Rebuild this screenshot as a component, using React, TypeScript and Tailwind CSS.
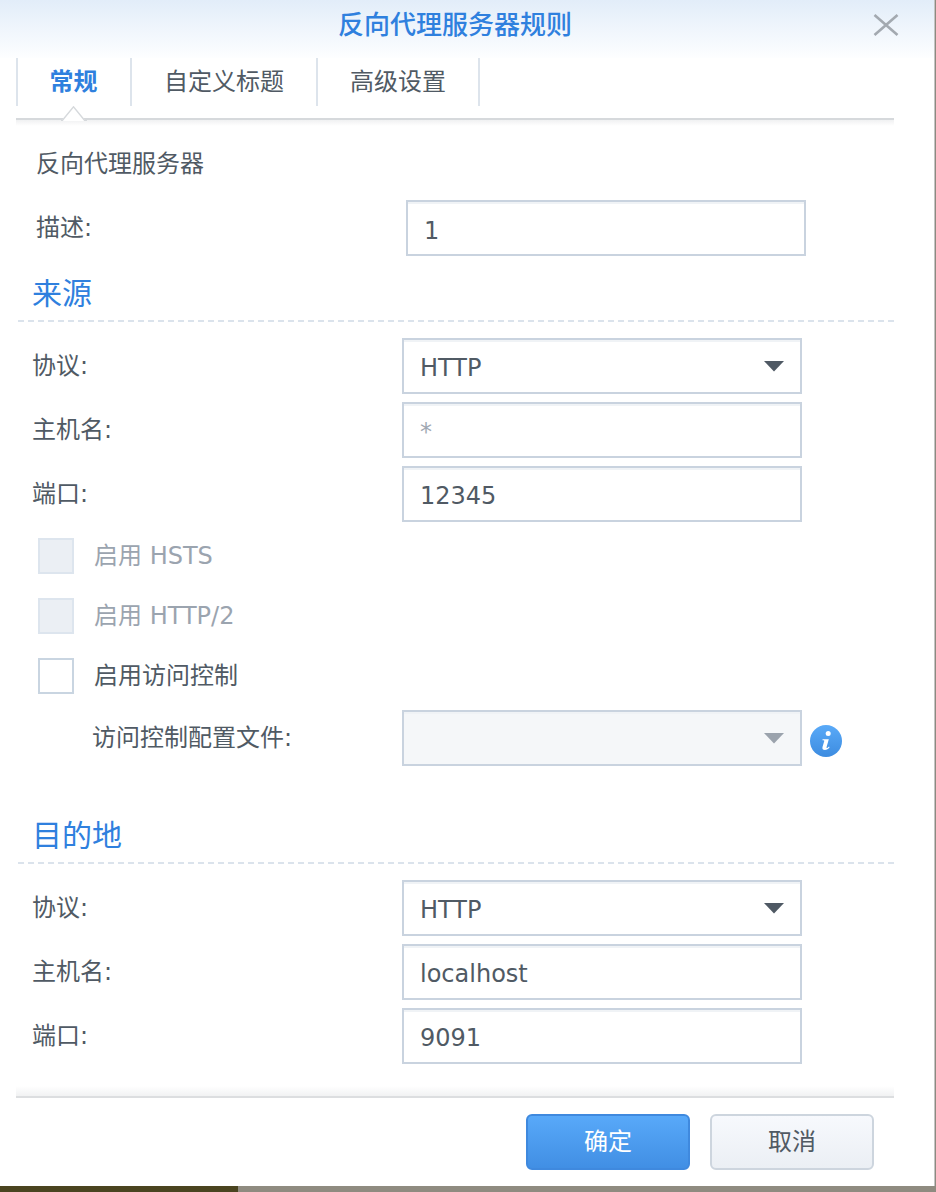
const font = '[font-family:"DejaVu_Sans","Noto_Sans_CJK_SC",sans-serif]';

function Caret({ disabled }: { disabled?: boolean }) {
  return (
    <svg width="20" height="11" viewBox="0 0 20 11" className="shrink-0">
      <path d="M0 0H20L10 10.5Z" fill={disabled ? '#9ba3ad' : '#4f5964'} />
    </svg>
  );
}

function Field({ label, value, select, muted, disabled }: { label: string; value?: string; select?: boolean; muted?: boolean; disabled?: boolean }) {
  return (
    <div className="flex items-center">
      <div className="w-[386px] pl-4 text-[24px] leading-[32px]">{label}</div>
      <div
        className={`flex h-14 w-[400px] items-center justify-between border-2 border-[#c9d3df] pl-[16px] pr-[16px] text-[24px] leading-[32px] shadow-[inset_0_2px_0_#f0f3f6] ${disabled ? 'bg-[#f5f7f9]' : 'bg-white'} ${muted ? 'text-[#a0a8b2]' : ''}`}
      >
        <span className="pt-[3px]">{value}</span>
        {select && <Caret disabled={disabled} />}
      </div>
    </div>
  );
}

function Check({ label, disabled }: { label: string; disabled?: boolean }) {
  return (
    <div className="flex items-center pl-[22px]">
      <div className={`h-9 w-9 border-2 ${disabled ? 'border-[#dde5ee] bg-[#ebeff4]' : 'border-[#c9d5e1] bg-white'}`} />
      <span className={`ml-5 text-[24px] leading-[36px] ${disabled ? 'text-[#9ba4af]' : ''}`}>{label}</span>
    </div>
  );
}

function SectionTitle({ children, mt }: { children: string; mt: string }) {
  return (
    <>
      <div className={`${mt} h-10 pl-4 text-[30px] leading-[42px] text-[#2f80de]`}>{children}</div>
      <div className="mt-[7px] h-[2px] bg-[repeating-linear-gradient(90deg,#dbe3ec_0_6px,transparent_6px_10px)] bg-[position:2px_0]" />
    </>
  );
}

function InfoIcon() {
  return (
    <svg width="32" height="32" viewBox="0 0 32 32" className="ml-2 mt-[6px] shrink-0">
      <defs>
        <linearGradient id="info" x1="0" y1="0" x2="0" y2="1">
          <stop offset="0" stopColor="#5aaaf8" />
          <stop offset="1" stopColor="#3d8ce0" />
        </linearGradient>
      </defs>
      <circle cx="16" cy="16" r="16" fill="url(#info)" />
      <circle cx="18.2" cy="8.6" r="2.5" fill="#fff" />
      <path d="M12.6 14.2h6.2l-2.3 8c-.2.8.5 1 1.1.5l1.4-1.2.6.8c-1.3 1.7-2.8 2.7-4.7 2.7-2 0-2.9-1-2.4-2.9l1.7-5.8c.2-.7-.1-1-1.8-1z" fill="#fff" />
    </svg>
  );
}

export default function App() {
  return (
    <div className={`h-[1192px] w-[936px] overflow-hidden bg-[#8d8a80] text-[#505a64] ${font}`}>
      <div className="h-[1186px] w-[935px] border-r border-[#c4c4c4] bg-white">
        {/* Title bar */}
        <div className="relative flex h-[58px] items-center justify-center bg-gradient-to-b from-[#e2edf9] to-[#fdfeff] pr-[24px]">
          <span className="-mt-[8px] text-[26px] font-medium leading-[36px] text-[#2f80de]">反向代理服务器规则</span>
          <svg width="26" height="22" viewBox="0 0 26 22" className="absolute right-[35px] top-[14px]">
            <path d="M1.5 1L24.5 21M24.5 1L1.5 21" stroke="#a3a9b0" strokeWidth="2.6" fill="none" />
          </svg>
        </div>

        {/* Tabs */}
        <div className="ml-4 flex h-12 text-[24px] leading-[48px]">
          <div className="w-[114px] border-l-2 border-[#dde4ec] pr-[1px] text-center font-bold text-[#2f80de]">常规</div>
          <div className="w-[186px] border-l-2 border-[#dde4ec] text-center">自定义标题</div>
          <div className="w-[162px] border-l-2 border-[#dde4ec] text-center">高级设置</div>
          <div className="w-[2px] bg-[#dde4ec]" />
        </div>
        <div className="relative mx-4 h-[14px] w-[878px] border-b-2 border-[#d6d9dc]">
          <div className="absolute left-0 right-0 top-[14px] h-[6px] bg-gradient-to-b from-[#f0f1f2] to-white" />
          <svg width="26" height="15" viewBox="0 0 26 15" className="absolute left-[45px] top-0">
            <path d="M1 14L12.5 0.5L24 14L26 15H0Z" fill="#fff" />
            <path d="M0 14.2H1.5L12.5 0.8L23.5 14.2H26" stroke="#d6d9dc" strokeWidth="1.4" fill="none" />
          </svg>
        </div>

        {/* Form */}
        <div className="mx-4 w-[878px]">
          <div className="mt-[28px] h-[34px] pl-5 text-[24px] leading-[32px]">反向代理服务器</div>
          <div className="mt-[18px] flex items-center">
            <div className="w-[390px] pl-5 text-[24px] leading-[32px]">描述:</div>
            <div className="flex h-14 w-[400px] items-center border-2 border-[#c9d3df] pl-[16px] pt-[5px] text-[24px] shadow-[inset_0_2px_0_#f0f3f6]">1</div>
          </div>

          <SectionTitle mt="mt-[17px]">来源</SectionTitle>
          <div className="mt-4 flex flex-col gap-2">
            <Field label="协议:" value="HTTP" select />
            <Field label="主机名:" value="*" muted />
            <Field label="端口:" value="12345" />
          </div>

          <div className="mt-4 flex flex-col gap-6">
            <Check label="启用 HSTS" disabled />
            <Check label="启用 HTTP/2" disabled />
            <Check label="启用访问控制" />
          </div>

          <div className="mt-4 flex items-center">
            <div className="w-[386px] pl-[76px] text-[24px] leading-[32px]">访问控制配置文件:</div>
            <div className="flex h-14 w-[400px] items-center justify-end border-2 border-[#c9d3df] bg-[#f5f7f9] pr-4 shadow-[inset_0_2px_0_#f0f3f6]">
              <Caret disabled />
            </div>
            <InfoIcon />
          </div>

          <SectionTitle mt="mt-[49px]">目的地</SectionTitle>
          <div className="mt-4 flex flex-col gap-2">
            <Field label="协议:" value="HTTP" select />
            <Field label="主机名:" value="localhost" />
            <Field label="端口:" value="9091" />
          </div>

          {/* Footer */}
          <div className="mt-[22px] h-[10px] bg-gradient-to-b from-white to-[#f1f2f3]" />
          <div className="h-[2px] bg-[#dcdee0]" />
          <div className="mt-4 flex justify-end gap-5 pr-5">
            <button className="h-14 w-[164px] rounded-[6px] border-2 border-[#3f89de] bg-gradient-to-b from-[#58a9f9] to-[#418fe4] text-[24px] text-white">确定</button>
            <button className="h-14 w-[164px] rounded-[6px] border-2 border-[#cdd5de] bg-gradient-to-b from-[#f7f9fd] to-[#ebeff4] text-[24px]">取消</button>
          </div>
        </div>
      </div>

      {/* Wallpaper edge below the window */}
      <div className="flex h-[6px]">
        <div className="w-[238px] bg-[#4a4420]" />
        <div className="flex-1 bg-[#8f8b80]" />
      </div>
    </div>
  );
}
